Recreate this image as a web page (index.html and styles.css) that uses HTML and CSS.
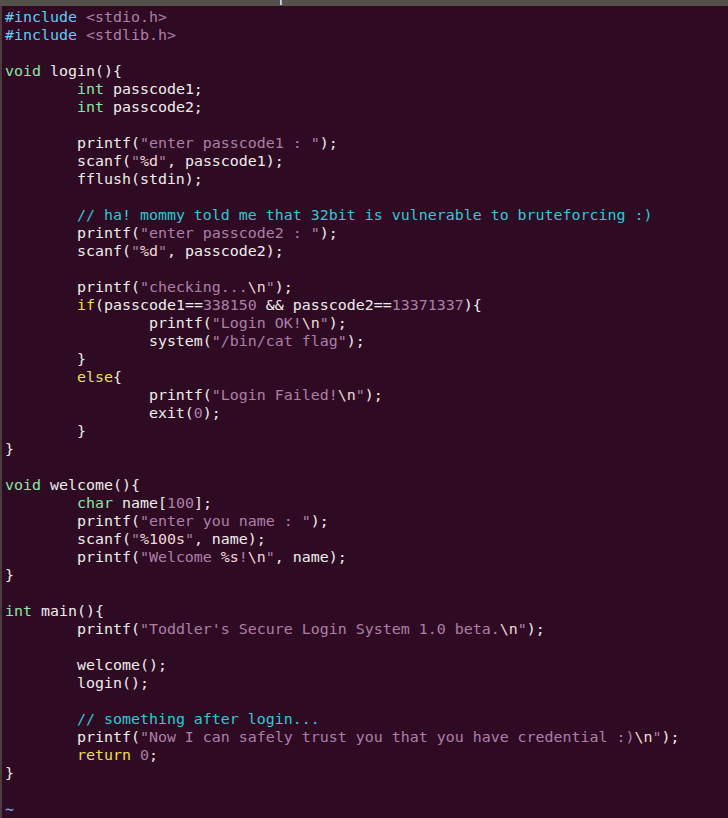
FILE: index.html
```html
<!DOCTYPE html>
<html>
<head>
<meta charset="utf-8">
<link rel="stylesheet" href="styles.css">
</head>
<body>
<div class="topbar"><span class="mark"></span></div>
<div class="main">
<div class="gutter"></div>
<pre class="code"><span class="pp">#include</span> <span class="s">&lt;stdio.h&gt;</span>
<span class="pp">#include</span> <span class="s">&lt;stdlib.h&gt;</span>

<span class="ty">void</span> login(){
        <span class="ty">int</span> passcode1;
        <span class="ty">int</span> passcode2;

        printf(<span class="s">"enter passcode1 : "</span>);
        scanf(<span class="s">"</span><span class="sp">%d</span><span class="s">"</span>, passcode1);
        fflush(stdin);

        <span class="c">// ha! mommy told me that 32bit is vulnerable to bruteforcing :)</span>
        printf(<span class="s">"enter passcode2 : "</span>);
        scanf(<span class="s">"</span><span class="sp">%d</span><span class="s">"</span>, passcode2);

        printf(<span class="s">"checking...</span><span class="sp">\n</span><span class="s">"</span>);
        <span class="st">if</span>(passcode1==<span class="s">338150</span> &amp;&amp; passcode2==<span class="s">13371337</span>){
                printf(<span class="s">"Login OK!</span><span class="sp">\n</span><span class="s">"</span>);
                system(<span class="s">"/bin/cat flag"</span>);
        }
        <span class="st">else</span>{
                printf(<span class="s">"Login Failed!</span><span class="sp">\n</span><span class="s">"</span>);
                exit(<span class="s">0</span>);
        }
}

<span class="ty">void</span> welcome(){
        <span class="ty">char</span> name[<span class="s">100</span>];
        printf(<span class="s">"enter you name : "</span>);
        scanf(<span class="s">"</span><span class="sp">%100s</span><span class="s">"</span>, name);
        printf(<span class="s">"Welcome </span><span class="sp">%s</span><span class="s">!</span><span class="sp">\n</span><span class="s">"</span>, name);
}

<span class="ty">int</span> main(){
        printf(<span class="s">"Toddler's Secure Login System 1.0 beta.</span><span class="sp">\n</span><span class="s">"</span>);

        welcome();
        login();

        <span class="c">// something after login...</span>
        printf(<span class="s">"Now I can safely trust you that you have credential :)</span><span class="sp">\n</span><span class="s">"</span>);
        <span class="st">return</span> <span class="s">0</span>;
}

<span class="nt">~</span>
</pre>
</div>
</body>
</html>
```
FILE: styles.css
```css
html, body {
  margin: 0;
  padding: 0;
  background: #2e0b23;
  height: 100%;
  overflow: hidden;
}
.topbar {
  height: 6px;
  background: #54514a;
  display: flex;
}
.mark {
  width: 2px;
  height: 5px;
  margin-left: 280px;
  background: linear-gradient(90deg, #e8e6f0, #8aa8d8);
}
.main {
  display: flex;
  height: calc(100% - 6px);
}
.gutter {
  width: 2px;
  flex: none;
  background: #4a3b3f;
}
.code {
  margin: 0;
  padding: 2px 0 0 3px;
  font-family: "DejaVu Sans Mono", "Liberation Mono", monospace;
  font-size: 14.95px;
  line-height: 18px;
  color: #eeeeec;
  white-space: pre;
}
.pp { color: #5fcdf5; }
.s { color: #ad7fa8; }
.ty { color: #86e8a6; }
.st { color: #e8e14a; }
.sp { color: #f4d8d8; }
.c { color: #33c7d4; }
.nt { color: #729fcf; font-weight: bold; }
```
